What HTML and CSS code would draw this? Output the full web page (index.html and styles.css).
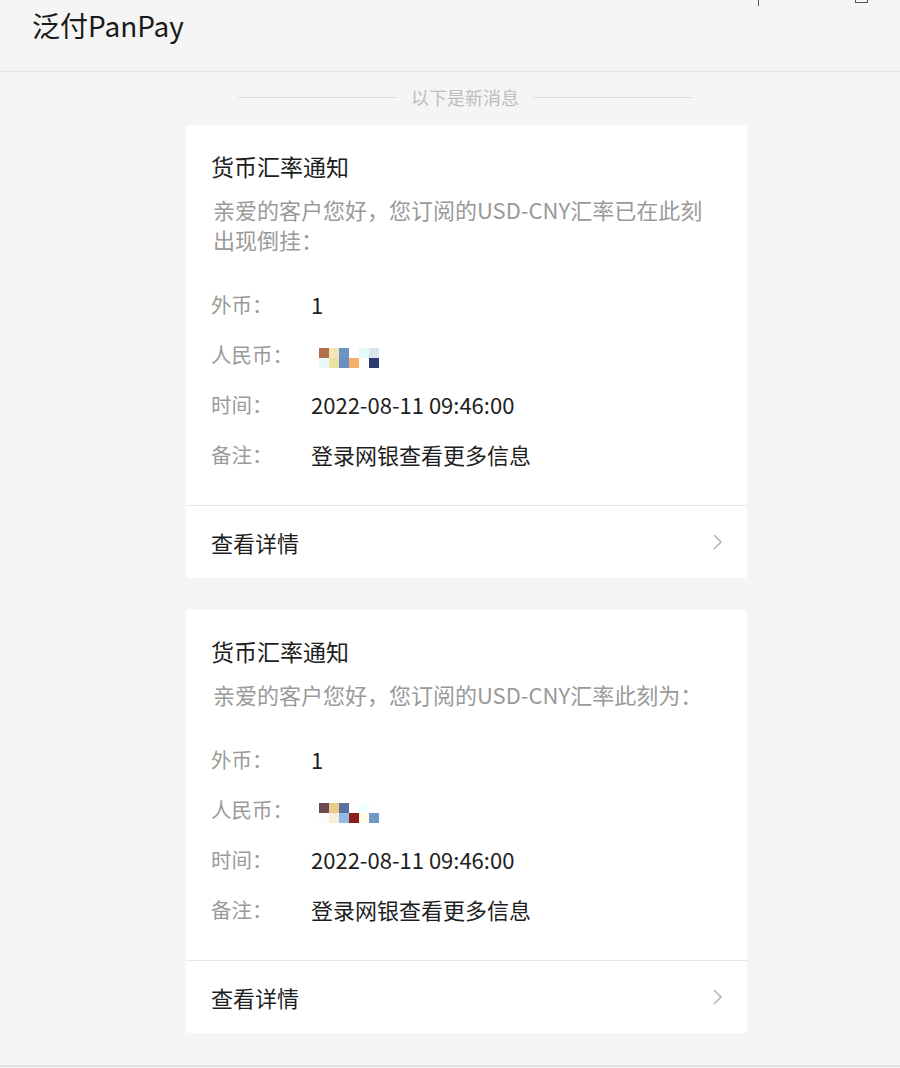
FILE: index.html
```html
<!DOCTYPE html>
<html lang="zh-CN">
<head>
<meta charset="utf-8">
<title>泛付PanPay</title>
<link rel="stylesheet" href="styles.css">
</head>
<body>
<header class="header">
  <div class="brand">泛付PanPay</div>
  <span class="win-line"></span>
  <span class="win-box"></span>
</header>

<main class="feed">
  <div class="new-divider">
    <span class="rule"></span>
    <span class="new-text">以下是新消息</span>
    <span class="rule"></span>
  </div>

  <section class="card">
    <div class="card-body">
      <h2 class="card-title">货币汇率通知</h2>
      <p class="card-desc">亲爱的客户您好，您订阅的USD-CNY汇率已在此刻出现倒挂：</p>
      <dl class="fields">
        <div class="field"><dt>外币：</dt><dd>1</dd></div>
        <div class="field"><dt>人民币：</dt><dd>
          <span class="mosaic">
            <i class="m a1"></i><i class="m a2"></i><i class="m a3"></i><i class="m a4"></i><i class="m a5"></i><i class="m a6"></i>
            <i class="m b1"></i><i class="m b2"></i><i class="m b3"></i><i class="m b4"></i><i class="m b5"></i><i class="m b6"></i>
          </span>
        </dd></div>
        <div class="field"><dt>时间：</dt><dd>2022-08-11 09:46:00</dd></div>
        <div class="field"><dt>备注：</dt><dd>登录网银查看更多信息</dd></div>
      </dl>
    </div>
    <a class="card-link">
      <span>查看详情</span>
      <svg class="chev" width="12" height="18" viewBox="0 0 12 18"><path d="M3 2 L10 9 L3 16" fill="none" stroke="#b8b8b8" stroke-width="1.6"/></svg>
    </a>
  </section>

  <section class="card">
    <div class="card-body">
      <h2 class="card-title">货币汇率通知</h2>
      <p class="card-desc">亲爱的客户您好，您订阅的USD-CNY汇率此刻为：</p>
      <dl class="fields">
        <div class="field"><dt>外币：</dt><dd>1</dd></div>
        <div class="field"><dt>人民币：</dt><dd>
          <span class="mosaic">
            <i class="m c1"></i><i class="m c2"></i><i class="m c3"></i><i class="m c4"></i><i class="m c5"></i><i class="m c6"></i>
            <i class="m d1"></i><i class="m d2"></i><i class="m d3"></i><i class="m d4"></i><i class="m d5"></i><i class="m d6"></i>
          </span>
        </dd></div>
        <div class="field"><dt>时间：</dt><dd>2022-08-11 09:46:00</dd></div>
        <div class="field"><dt>备注：</dt><dd>登录网银查看更多信息</dd></div>
      </dl>
    </div>
    <a class="card-link">
      <span>查看详情</span>
      <svg class="chev" width="12" height="18" viewBox="0 0 12 18"><path d="M3 2 L10 9 L3 16" fill="none" stroke="#b8b8b8" stroke-width="1.6"/></svg>
    </a>
  </section>
</main>
<div class="footer-rule"></div>
</body>
</html>
```

FILE: styles.css
```css
* { box-sizing: border-box; }
html, body { margin: 0; padding: 0; }
body {
  background: #f5f5f5;
  font-family: "Noto Sans CJK SC", "Noto Sans", sans-serif;
  color: #222;
  width: 900px;
  height: 1068px;
  overflow: hidden;
}
.header {
  position: relative;
  height: 72px;
  border-bottom: 1px solid #e3e3e3;
  padding-left: 32px;
}
.brand {
  font-size: 28px;
  line-height: 50px;
  color: #1a1a1a;
}
.win-line {
  position: absolute;
  left: 758px;
  top: 0;
  width: 1px;
  height: 6px;
  background: #555;
}
.win-box {
  position: absolute;
  left: 855px;
  top: -8px;
  width: 13px;
  height: 11px;
  border: 1px solid #555;
}
.feed {
  margin-left: 186px;
  width: 561px;
}
.new-divider {
  display: flex;
  align-items: center;
  margin: 13px 0 16px 52px;
  width: 454px;
  height: 24px;
  gap: 14px;
}
.rule {
  flex: 1;
  height: 1px;
  background: #dcdcdc;
}
.new-text {
  font-size: 18px;
  color: #bdbdbd;
  line-height: 24px;
}
.card {
  background: #fff;
  border-radius: 3px;
  margin-bottom: 32px;
}
.card-body {
  padding: 26px 25px 26px;
  border-bottom: 1px solid #e8e8e8;
}
.card-title {
  margin: 0;
  font-size: 23px;
  font-weight: 400;
  line-height: 30px;
  color: #1e1e1e;
}
.card-desc {
  margin: 13px 0 0 2px;
  font-size: 22px;
  line-height: 30px;
  color: #9a9a9a;
}
.fields {
  margin: 25px 0 0;
}
.field {
  display: flex;
  align-items: center;
  height: 50px;
}
.field dt {
  width: 100px;
  flex: none;
  font-size: 20.5px;
  color: #9a9a9a;
}
.field dd {
  margin: 0;
  font-size: 22px;
  color: #1e1e1e;
}
.mosaic {
  display: grid;
  grid-template-columns: repeat(6, 10px);
  grid-template-rows: repeat(2, 10px);
  margin: 8px 0 0 8px;
}
.m { display: block; }
.a1 { background: #b07048; } .a2 { background: #f2e6b8; } .a3 { background: #6a94c4; }
.a4 { background: #ffffff; } .a5 { background: #e4fafa; } .a6 { background: #dce4ec; }
.b1 { background: #e8fafa; } .b2 { background: #ede0a0; } .b3 { background: #6890c0; }
.b4 { background: #f4b06a; } .b5 { background: #ffffff; } .b6 { background: #2c3c70; }
.c1 { background: #6e4a52; } .c2 { background: #e8cc88; } .c3 { background: #5a6ea0; }
.c4 { background: #ffffff; } .c5 { background: #f0ffff; } .c6 { background: #ffffff; }
.d1 { background: #fafcfc; } .d2 { background: #f8eedc; } .d3 { background: #90bce4; }
.d4 { background: #8a2018; } .d5 { background: #fffbe4; } .d6 { background: #7098c8; }
.card-link {
  display: flex;
  align-items: center;
  justify-content: space-between;
  height: 72px;
  padding: 0 24px 0 25px;
  font-size: 22px;
  color: #1e1e1e;
}
.chev { display: block; }
.footer-rule {
  margin-top: 1px;
  height: 3px;
  border-top: 2px solid #e3e3e3;
}
```
